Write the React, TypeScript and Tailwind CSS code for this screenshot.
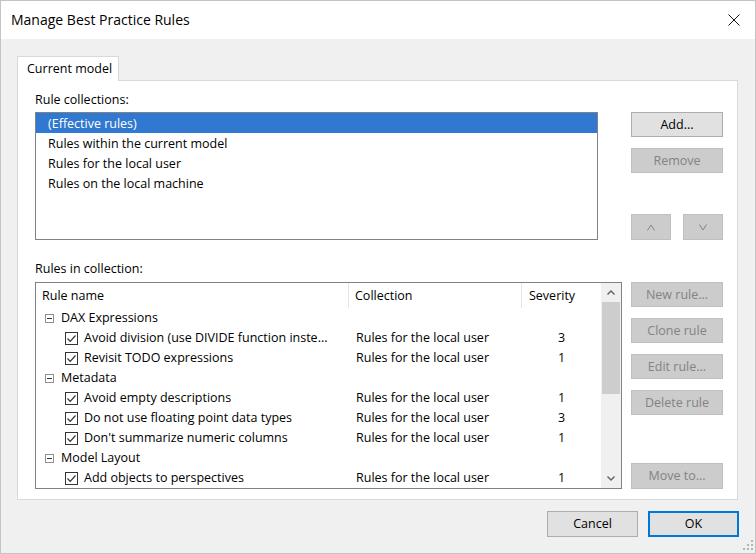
import React from "react";

const collections = [
  "(Effective rules)",
  "Rules within the current model",
  "Rules for the local user",
  "Rules on the local machine",
];

type Row =
  | { kind: "group"; name: string }
  | { kind: "rule"; name: string; collection: string; severity: number };

const rows: Row[] = [
  { kind: "group", name: "DAX Expressions" },
  { kind: "rule", name: "Avoid division (use DIVIDE function inste...", collection: "Rules for the local user", severity: 3 },
  { kind: "rule", name: "Revisit TODO expressions", collection: "Rules for the local user", severity: 1 },
  { kind: "group", name: "Metadata" },
  { kind: "rule", name: "Avoid empty descriptions", collection: "Rules for the local user", severity: 1 },
  { kind: "rule", name: "Do not use floating point data types", collection: "Rules for the local user", severity: 3 },
  { kind: "rule", name: "Don't summarize numeric columns", collection: "Rules for the local user", severity: 1 },
  { kind: "group", name: "Model Layout" },
  { kind: "rule", name: "Add objects to perspectives", collection: "Rules for the local user", severity: 1 },
];

const Btn = ({
  children,
  disabled,
  className = "",
}: {
  children: React.ReactNode;
  disabled?: boolean;
  className?: string;
}) => (
  <div
    className={
      "h-[25px] flex items-center justify-center border " +
      (disabled
        ? "bg-[#cccccc] border-[#bfbfbf] text-[#838383] "
        : "bg-[#e1e1e1] border-[#adadad] text-black ") +
      className
    }
  >
    {children}
  </div>
);

const CheckBox = () => (
  <svg width="13" height="13" viewBox="0 0 13 13" className="shrink-0">
    <rect x="0.5" y="0.5" width="12" height="12" fill="#fff" stroke="#333" />
    <path d="M2.5 6.5 L5.2 9.3 L10.5 3.5" fill="none" stroke="#333" strokeWidth="1.2" />
  </svg>
);

const Expander = () => (
  <svg width="9" height="9" viewBox="0 0 9 9" className="shrink-0">
    <rect x="0.5" y="0.5" width="8" height="8" fill="#fff" stroke="#919191" />
    <path d="M2 4.5 H7" stroke="#333" strokeWidth="1" />
  </svg>
);

const App = () => {
  return (
    <div className="relative w-[756px] h-[554px] bg-[#f0f0f0] border border-[#c4c4c4] flex flex-col text-[12.5px] leading-[14px] text-black font-['Open_Sans',sans-serif] overflow-hidden">
      {/* Title bar */}
      <div className="h-[38px] bg-white flex items-center justify-between pl-[10px] pr-[15px] shrink-0">
        <span className="text-[14px] leading-[20px]">Manage Best Practice Rules</span>
        <svg width="12" height="12" viewBox="0 0 12 12">
          <path d="M0.5 0.5 L11.5 11.5 M11.5 0.5 L0.5 11.5" stroke="#111" strokeWidth="1" />
        </svg>
      </div>

      <div className="flex-1 px-[16px] pt-[17px] flex flex-col">
        {/* Tab */}
        <div className="relative z-10 w-[102px] h-[25px] -mb-[1px] bg-white border border-b-0 border-[#d9d9d9] flex items-center pl-[9px] pb-[1px] whitespace-nowrap">
          Current model
        </div>

        {/* Tab page */}
        <div className="w-[721px] h-[420px] bg-white border border-[#d9d9d9] pl-[17px] pt-[12px]">
          <div>Rule collections:</div>
          <div className="flex mt-[5px]">
            <div className="w-[563px] h-[128px] border border-[#828282] bg-white">
              {collections.map((c, i) => (
                <div
                  key={c}
                  className={
                    "h-[20px] flex items-center pl-[12px] pt-[1px] " +
                    (i === 0 ? "bg-[#3078d0] text-white" : "")
                  }
                >
                  {c}
                </div>
              ))}
            </div>
            <div className="ml-[33px] w-[92px] flex flex-col">
              <Btn>Add...</Btn>
              <Btn disabled className="mt-[11px]">Remove</Btn>
              <div className="flex-1" />
              <div className="flex justify-between">
                <Btn disabled className="w-[40px] h-[26px]">
                  <svg width="8" height="7" viewBox="0 0 8 7">
                    <path d="M0.5 6.5 L4 1 L7.5 6.5" fill="none" stroke="#838383" strokeWidth="1" />
                  </svg>
                </Btn>
                <Btn disabled className="w-[40px] h-[26px]">
                  <svg width="8" height="7" viewBox="0 0 8 7">
                    <path d="M0.5 0.5 L4 6 L7.5 0.5" fill="none" stroke="#838383" strokeWidth="1" />
                  </svg>
                </Btn>
              </div>
            </div>
          </div>

          <div className="mt-[22px]">Rules in collection:</div>
          <div className="flex mt-[6px]">
            <div className="w-[587px] h-[207px] border border-[#828282] bg-white flex">
              <div className="flex-1 flex flex-col">
                <div className="h-[25px] flex">
                  <div className="w-[313px] border-r border-[#e5e5e5] flex items-center pl-[6px]">Rule name</div>
                  <div className="w-[173px] border-r border-[#e5e5e5] flex items-center pl-[6px]">Collection</div>
                  <div className="w-[79px] flex items-center pl-[7px]">Severity</div>
                </div>
                {rows.map((r, i) =>
                  r.kind === "group" ? (
                    <div key={i} className="h-[20px] flex items-center pl-[9px] whitespace-nowrap">
                      <Expander />
                      <span className="ml-[7px]">{r.name}</span>
                    </div>
                  ) : (
                    <div key={i} className="h-[20px] flex items-center whitespace-nowrap">
                      <div className="w-[313px] flex items-center pl-[29px]">
                        <CheckBox />
                        <span className="ml-[6px]">{r.name}</span>
                      </div>
                      <div className="w-[173px] pl-[7px]">{r.collection}</div>
                      <div className="w-[79px] text-center">{r.severity}</div>
                    </div>
                  )
                )}
              </div>
              {/* Scrollbar */}
              <div className="w-[20px] bg-[#f0f0f0] flex flex-col">
                <div className="h-[19px] flex items-center justify-center">
                  <svg width="8" height="5" viewBox="0 0 8 5">
                    <path d="M0.5 4.5 L4 1 L7.5 4.5" fill="none" stroke="#606060" strokeWidth="1.4" />
                  </svg>
                </div>
                <div className="mx-[1px] h-[92px] bg-[#cdcdcd]" />
                <div className="flex-1" />
                <div className="h-[19px] flex items-center justify-center">
                  <svg width="8" height="5" viewBox="0 0 8 5">
                    <path d="M0.5 0.5 L4 4 L7.5 0.5" fill="none" stroke="#606060" strokeWidth="1.4" />
                  </svg>
                </div>
              </div>
            </div>
            <div className="ml-[9px] w-[92px] flex flex-col">
              <Btn disabled>New rule...</Btn>
              <Btn disabled className="mt-[11px]">Clone rule</Btn>
              <Btn disabled className="mt-[11px]">Edit rule...</Btn>
              <Btn disabled className="mt-[11px]">Delete rule</Btn>
              <div className="flex-1" />
              <Btn disabled className="h-[26px]">Move to...</Btn>
            </div>
          </div>
        </div>

        {/* Dialog buttons */}
        <div className="flex justify-end mt-[11px] gap-[10px]">
          <Btn className="w-[91px] h-[26px]">Cancel</Btn>
          <div className="w-[91px] h-[26px] flex items-center justify-center bg-[#e1e1e1] border-2 border-[#0078d7]">
            OK
          </div>
        </div>
      </div>

      {/* Size grip */}
      <svg width="10" height="10" viewBox="0 0 10 10" className="absolute right-[2px] bottom-[3px]">
        <g fill="#b4b4b4">
          <rect x="8" y="0" width="2" height="2" />
          <rect x="4" y="4" width="2" height="2" />
          <rect x="8" y="4" width="2" height="2" />
          <rect x="0" y="8" width="2" height="2" />
          <rect x="4" y="8" width="2" height="2" />
          <rect x="8" y="8" width="2" height="2" />
        </g>
      </svg>
    </div>
  );
};

export default App;
